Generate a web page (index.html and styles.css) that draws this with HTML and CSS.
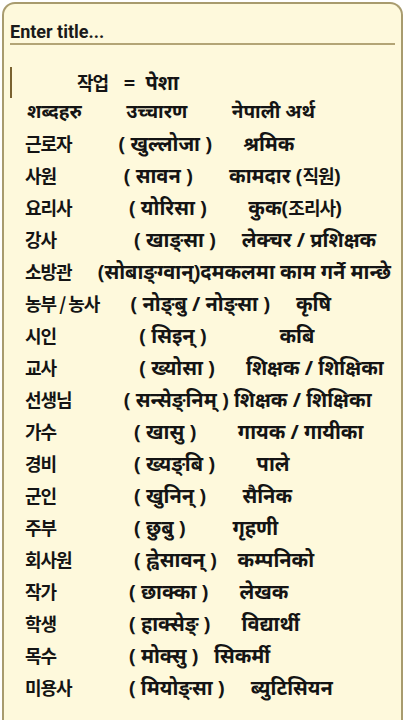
FILE: index.html
```html
<!DOCTYPE html>
<html lang="ne">
<head>
<meta charset="utf-8">
<link rel="stylesheet" href="styles.css">
</head>
<body>
<div class="card">
  <div class="title">Enter title...</div>
  <div class="editor">
    <span class="cursor"></span>
<div class="line head">          <span class="ko">작업</span>   =  पेशा</div>
<div class="line sub">शब्दहरु         उच्चारण         नेपाली अर्थ</div>
<div class="line"><span class="ko">근로자</span>         ( खुल्लोजा )      श्रमिक</div>
<div class="line"><span class="ko">사원</span>             ( सावन )       कामदार (<span class="ko">직원</span>)</div>
<div class="line"><span class="ko">요리사</span>           ( योरिसा )        कुक(<span class="ko">조리사</span>)</div>
<div class="line"><span class="ko">강사</span>               ( खाङ्सा )     लेक्चर / प्रशिक्षक</div>
<div class="line"><span class="ko">소방관</span>     (सोबाङ्ग्वान्)दमकलमा काम गर्ने मान्छे</div>
<div class="line"><span class="ko">농부 / 농사</span>      ( नोङ्बु / नोङ्सा )     कृषि</div>
<div class="line"><span class="ko">시인</span>                ( सिइन् )              कबि</div>
<div class="line"><span class="ko">교사</span>                ( ख्योसा )      शिक्षक / शिक्षिका</div>
<div class="line"><span class="ko">선생님</span>          ( सन्सेङ्निम् ) शिक्षक / शिक्षिका</div>
<div class="line"><span class="ko">가수</span>               ( खासु )        गायक / गायीका</div>
<div class="line"><span class="ko">경비</span>               ( ख्यङ्बि )        पाले</div>
<div class="line"><span class="ko">군인</span>               ( खुनिन् )       सैनिक</div>
<div class="line"><span class="ko">주부</span>               ( छुबु )         गृहणी</div>
<div class="line"><span class="ko">회사원</span>            ( ह्वेसावन् )    कम्पनिको</div>
<div class="line"><span class="ko">작가</span>              ( छाक्का )      लेखक</div>
<div class="line"><span class="ko">학생</span>              ( हाक्सेङ् )      विद्यार्थी</div>
<div class="line"><span class="ko">목수</span>              ( मोक्सु )   सिकर्मी</div>
<div class="line"><span class="ko">미용사</span>           ( मियोङ्सा )     ब्युटिसियन</div>
  </div>
</div>
</body>
</html>
```

FILE: styles.css
```css
html, body {
  margin: 0;
  padding: 0;
  background: #ffffff;
}
body {
  width: 405px;
  height: 720px;
  overflow: hidden;
  font-family: "Noto Sans", "Noto Sans Devanagari", "Noto Sans CJK KR", sans-serif;
  color: #141414;
}
.card {
  margin: 2px 2px 0 2px;
  height: 740px;
  box-sizing: border-box;
  border: 2px solid #a89b6e;
  border-bottom: none;
  border-radius: 13px 13px 0 0;
  background: #fef9dc;
  padding: 0 6px;
}
.title {
  font-family: Roboto, "Noto Sans", sans-serif;
  font-weight: 700;
  font-size: 18px;
  color: #1a1a1a;
  height: 39px;
  line-height: 56px;
  border-bottom: 2px solid #b3a576;
}
.editor {
  position: relative;
  padding-top: 24px;
}
.cursor {
  position: absolute;
  left: 0;
  top: 22px;
  width: 2px;
  height: 31px;
  background: #7a6230;
}
.line {
  white-space: pre;
  font-weight: 700;
  font-size: 20px;
  height: 32px;
  line-height: 32px;
  padding-left: 15px;
}
.ko {
  font-family: "Noto Sans CJK KR", sans-serif;
  font-size: 18px;
  letter-spacing: -1px;
}
.line.head {
  height: 26px;
  line-height: 26px;
}
.line.sub {
  font-size: 19px;
  padding-left: 17px;
}
```
